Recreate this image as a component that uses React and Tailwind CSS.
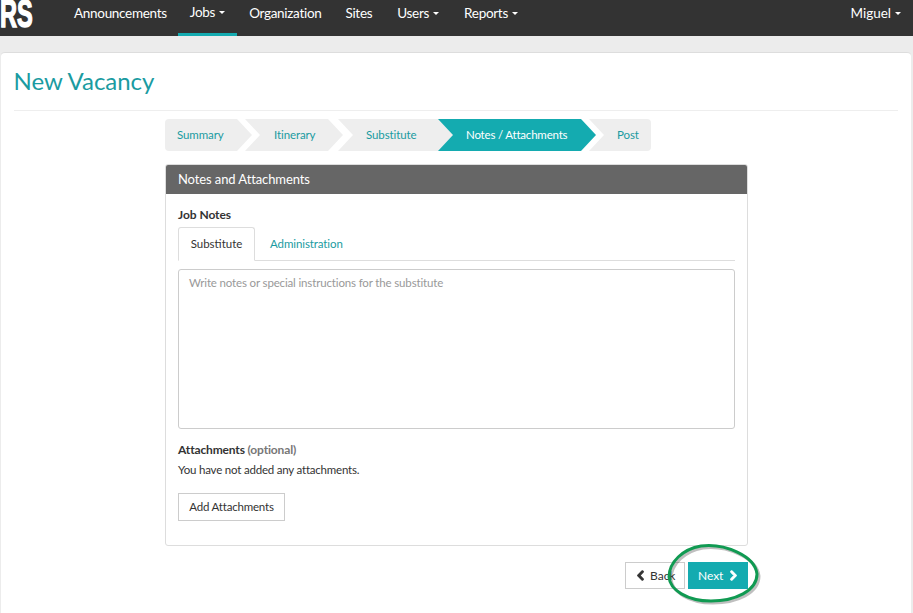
import React from "react";
import { FaChevronLeft, FaChevronRight } from "react-icons/fa";

const navItems = [
  { label: "Announcements", cls: "ml-[74px]" },
  { label: "Jobs", caret: true, active: true, cls: "ml-[11px]" },
  { label: "Organization", cls: "ml-3" },
  { label: "Sites", cls: "ml-6" },
  { label: "Users", caret: true, cls: "ml-[25px]" },
  { label: "Reports", caret: true, cls: "ml-[25px]" },
];

function Caret() {
  return <span className="inline-block ml-1 align-middle w-0 h-0 border-t-[3px] border-x-[3px] border-x-transparent border-t-white" />;
}

function Navbar() {
  return (
    <div className="h-9 bg-[#333333] flex text-white text-[13.5px] tracking-[-0.3px] relative">
      <span className="absolute left-0 top-0 font-['Liberation_Sans',sans-serif] font-bold text-[38px] leading-[29px] tracking-normal origin-left scale-x-[0.62] [-webkit-text-stroke:1.5px_white]">RS</span>
      {navItems.map((item) => (
        <div
          key={item.label}
          className={`h-9 flex items-center pb-[9px] ${item.cls} ${item.active ? "px-3 border-b-[3px] border-[#14abb0]" : ""}`}
        >
          {item.label}
          {item.caret && <Caret />}
        </div>
      ))}
      <div className="ml-auto mr-3 flex items-center pb-[9px] tracking-normal">
        Miguel
        <Caret />
      </div>
    </div>
  );
}

function Steps() {
  return (
    <div className="flex text-[11.5px] tracking-[-0.1px] h-8 text-[#1a9ba1] w-[486px]">
      <div className="w-[87px] pl-3 flex items-center rounded-l bg-[#eeeeee] [clip-path:polygon(0_0,calc(100%-15px)_0,100%_50%,calc(100%-15px)_100%,0_100%)]">Summary</div>
      <div className="w-[98px] -ml-[7px] pl-[29px] flex items-center bg-[#eeeeee] [clip-path:polygon(0_0,calc(100%-15px)_0,100%_50%,calc(100%-15px)_100%,0_100%,15px_50%)]">Itinerary</div>
      <div className="w-[116px] -ml-[5px] pl-[28px] flex items-center bg-[#eeeeee] [clip-path:polygon(0_0,calc(100%-15px)_0,100%_50%,calc(100%-15px)_100%,0_100%,15px_50%)]">Substitute</div>
      <div className="w-[158px] -ml-[16px] pl-[28px] flex items-center bg-[#14abb0] text-white tracking-[-0.2px] [clip-path:polygon(0_0,calc(100%-15px)_0,100%_50%,calc(100%-15px)_100%,0_100%,15px_50%)]">Notes / Attachments</div>
      <div className="flex-1 -ml-[7px] pl-[28px] flex items-center rounded-r bg-[#eeeeee] [clip-path:polygon(0_0,100%_0,100%_100%,0_100%,15px_50%)]">Post</div>
    </div>
  );
}

function NotesPanel() {
  return (
    <div className="w-[583px] mt-[13px] border border-[#dddddd] rounded-[3px] overflow-hidden h-[382px]">
      <div className="h-[29px] bg-[#666666] text-white text-[13px] tracking-[-0.1px] pl-3 flex items-center">Notes and Attachments</div>
      <div className="px-3 pt-[14px]">
        <div className="font-bold text-[12px] leading-[14px] tracking-[-0.05px]">Job Notes</div>
        <div className="flex border-b border-[#dddddd] h-[34px] mt-[5px] text-[11.5px]">
          <div className="w-[77px] h-[34px] bg-white border border-[#dddddd] border-b-white rounded-t-[3px] flex items-center justify-center">Substitute</div>
          <div className="ml-[15px] flex items-center text-[#1a9ba1] tracking-[-0.1px]">Administration</div>
        </div>
        <textarea
          className="block w-full h-40 mt-2 border border-[#cccccc] rounded-[3px] px-[10px] py-1 text-[11.5px] tracking-[-0.15px] text-[#333333] placeholder:text-[#999999] resize-none outline-none"
          placeholder="Write notes or special instructions for the substitute"
        />
        <div className="mt-[14px] font-bold text-[12px] leading-[14px] tracking-[-0.15px]">
          Attachments <span className="text-[#777777]">(optional)</span>
        </div>
        <div className="mt-[6px] text-[11.5px] tracking-[-0.2px] leading-[14px]">You have not added any attachments.</div>
        <button className="mt-4 w-[107px] h-7 border border-[#cccccc] text-[11.5px] tracking-[-0.2px] bg-white">Add Attachments</button>
      </div>
    </div>
  );
}

function Footer() {
  return (
    <div className="w-[583px] mt-4 flex justify-end gap-[3px] text-[12px] relative">
      <button className="w-[60px] h-[27px] border border-[#cccccc] bg-white flex items-center pl-[9px] gap-1">
        <FaChevronLeft className="text-[11px] text-[#333333]" stroke="currentColor" strokeWidth={50} />
        Back
      </button>
      <button className="w-[60px] h-[27px] bg-[#14abb0] text-white flex items-center pl-[10px] gap-[5px] tracking-[-0.05px]">
        Next
        <FaChevronRight className="text-[11px]" stroke="currentColor" strokeWidth={50} />
      </button>
      <svg className="absolute -right-[13px] -top-[18px] overflow-visible" width="96" height="60" viewBox="0 0 96 60" fill="none">
        <path
          d="M36 2 C 60 -1, 90 12, 92 30 C 92 47, 70 57, 46 57 C 22 57, 5 46, 4 33 C 4 18, 18 5, 36 2 Z"
          stroke="#000"
          strokeOpacity="0.25"
          strokeWidth="3"
          transform="translate(2 2)"
        />
        <path
          d="M36 2 C 60 -1, 90 12, 92 30 C 92 47, 70 57, 46 57 C 22 57, 5 46, 4 33 C 4 18, 18 5, 36 2 Z"
          stroke="#109a52"
          strokeWidth="3"
        />
      </svg>
    </div>
  );
}

export default function App() {
  return (
    <div className="h-[613px] overflow-hidden bg-[#ececec] font-['Lato',sans-serif] text-[#333333]">
      <Navbar />
      <div className="mt-4 ml-px mr-[2px] h-[600px] bg-white border-t border-[#dddddd] rounded-t-[4px] pl-[13px] pr-[13px]">
        <h1 className="text-[24px] leading-[29px] text-[#1a9ba1] pt-[13px] box-content -ml-[0.5px] tracking-[-0.03px]">New Vacancy</h1>
        <div className="border-t border-[#eeeeee] mt-[15px] mb-2" />
        <div className="pl-[151px]">
          <Steps />
          <NotesPanel />
          <Footer />
        </div>
      </div>
    </div>
  );
}
